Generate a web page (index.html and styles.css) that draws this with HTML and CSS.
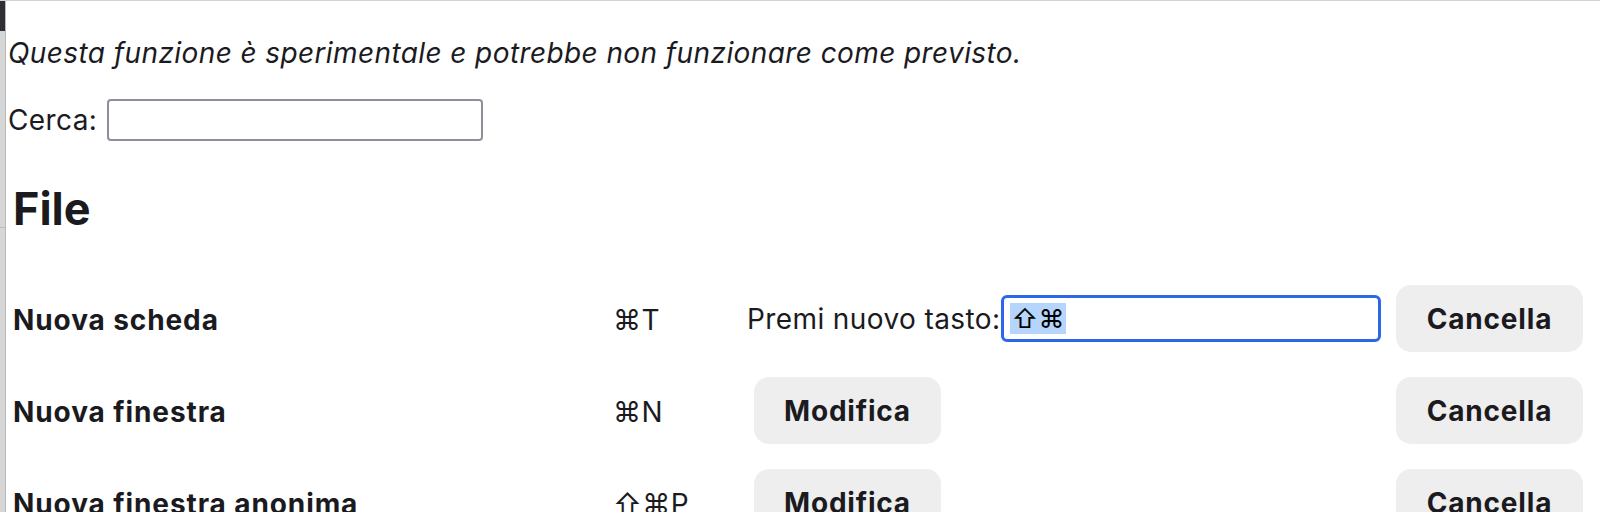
FILE: index.html
```html
<!DOCTYPE html>
<html lang="it">
<head>
<meta charset="utf-8">
<title>Scorciatoie</title>
<link rel="stylesheet" href="styles.css">
</head>
<body>
<div class="window">
  <div class="edge"></div>
  <main class="main">
    <p class="warning">Questa funzione è sperimentale e potrebbe non funzionare come previsto.</p>
    <div class="search">
      <label class="search-label" for="q">Cerca:</label>
      <input class="search-input" id="q" type="text">
    </div>
    <h1 class="section-title">File</h1>
    <div class="shortcuts">
      <div class="name">Nuova scheda</div>
      <div class="keys">⌘T</div>
      <div class="edit editing">
        <span class="prompt">Premi nuovo tasto:</span>
        <span class="key-input"><span class="sel">⇧⌘</span></span>
      </div>
      <div class="clear"><button class="btn">Cancella</button></div>

      <div class="name">Nuova finestra</div>
      <div class="keys">⌘N</div>
      <div class="edit"><button class="btn btn-edit">Modifica</button></div>
      <div class="clear"><button class="btn">Cancella</button></div>

      <div class="name">Nuova finestra anonima</div>
      <div class="keys">⇧⌘P</div>
      <div class="edit"><button class="btn btn-edit">Modifica</button></div>
      <div class="clear"><button class="btn">Cancella</button></div>
    </div>
  </main>
</div>
</body>
</html>
```
FILE: styles.css
```css
html, body {
  margin: 0;
  padding: 0;
  background: #ffffff;
}

body {
  font-family: Inter, "Noto Sans", "DejaVu Sans", sans-serif;
  color: #1b1b1f;
  font-size: 28px;
  letter-spacing: 0.4px;
  overflow: hidden;
}

.window {
  display: flex;
  height: 511px;
  border-top: 1px solid #d2d2d2;
}

.edge {
  flex: none;
  width: 5px;
  background:
    linear-gradient(to bottom, #2f2f33 0, #2f2f33 30px, #d6d6d6 30px, #d6d6d6 226px, #bcbcbc 226px, #bcbcbc 227px, #d6d6d6 227px);
  border-right: 1px solid #b9b9b9;
}

.main {
  flex: 1;
  min-width: 0;
  padding-left: 2px;
}

.warning {
  margin: 36px 0 0 0;
  font-style: italic;
  line-height: 32px;
}

.search {
  display: flex;
  align-items: center;
  gap: 10px;
  margin-top: 30px;
  height: 42px;
}

.search-label {
  line-height: 32px;
}

.search-input {
  box-sizing: border-box;
  width: 376px;
  height: 42px;
  margin: 0;
  border: 2px solid #8f8f99;
  border-radius: 4px;
  background: #fff;
  font: inherit;
}

.section-title {
  margin: 39px 0 0 5px;
  font-size: 45px;
  font-weight: 700;
  letter-spacing: 0;
  line-height: 58px;
}

.shortcuts {
  display: grid;
  grid-template-columns: 600px 134px 649px 187px;
  grid-auto-rows: 67px;
  row-gap: 25px;
  margin-top: 47px;
  padding-left: 5px;
  align-items: center;
}

.name {
  font-weight: 700;
  letter-spacing: 0.9px;
  line-height: 32px;
  padding-top: 3px;
}

.keys {
  line-height: 32px;
  padding-top: 3px;
}

.edit {
  display: flex;
  align-items: center;
}

.prompt {
  line-height: 32px;
}

.key-input {
  box-sizing: border-box;
  display: flex;
  align-items: center;
  width: 380px;
  height: 47px;
  margin-left: 1px;
  padding-left: 6px;
  border: 3px solid #2c67ea;
  border-radius: 6px;
  background: #fff;
}

.sel {
  background: #b5d5fd;
  color: #000;
  line-height: 31px;
  font-size: 26px;
  padding: 0 1px;
}

.btn {
  box-sizing: border-box;
  width: 187px;
  height: 67px;
  margin: 0;
  border: none;
  border-radius: 15px;
  background: #eeeeee;
  color: #1b1b1f;
  font-family: Inter, "Noto Sans", sans-serif;
  font-size: 28px;
  font-weight: 700;
  letter-spacing: 0.8px;
  padding: 0;
}

.btn-edit {
  margin-left: 7px;
}
```
